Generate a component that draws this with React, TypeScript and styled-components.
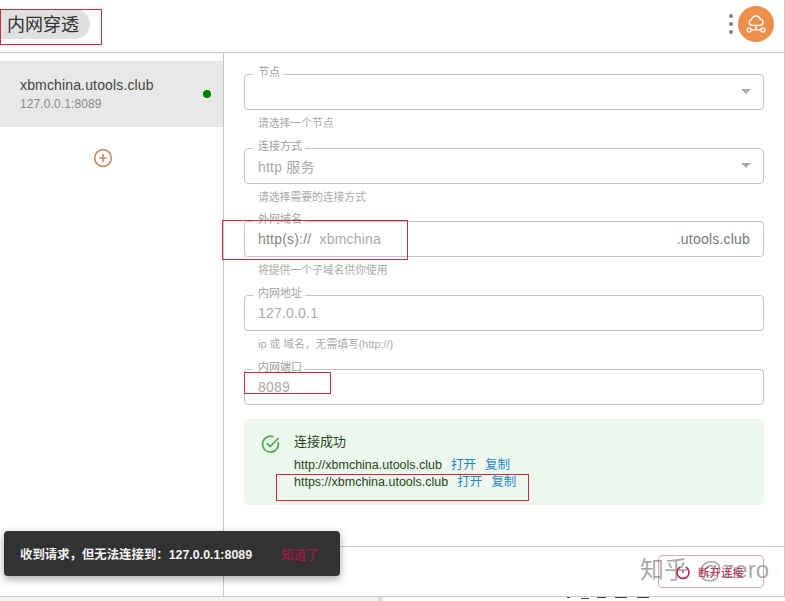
import { createGlobalStyle, styled } from 'styled-components';
import { CirclePlus } from 'lucide-react';

const GlobalStyle = createGlobalStyle`
  html, body {
    margin: 0;
    background: #fff;
    font-family: "Liberation Sans", "Noto Sans CJK SC", sans-serif;
    overflow: hidden;
  }
  * { box-sizing: border-box; }
`;

const Page = styled.div`
  position: relative;
  width: 785px;
  height: 601px;
  overflow: hidden;
`;
const Frame = styled.div`
  display: flex;
  flex-direction: column;
  width: 785px;
  height: 597px;
  border-right: 1px solid #c8c8c8;
  border-bottom: 1px solid #c8c8c8;
`;
const Header = styled.header`
  display: flex;
  align-items: center;
  justify-content: space-between;
  height: 53px;
  flex-shrink: 0;
  padding: 0 10px 5px 0;
  border-bottom: 1px solid #c8c8c8;
`;
const TitlePill = styled.h1`
  margin: 0;
  width: 90px;
  height: 30px;
  padding-left: 7px;
  background: #e0e0e0;
  border-radius: 0 15px 15px 0;
  color: #333;
  font-size: 18px;
  font-weight: 400;
  line-height: 32px;
`;
const HeaderActions = styled.div`
  display: flex;
  align-items: center;
  gap: 5px;
`;
const MenuDots = styled.div`
  display: flex;
  flex-direction: column;
  gap: 4px;
`;
const MenuDot = styled.span`
  width: 4px;
  height: 4px;
  border-radius: 50%;
  background: #808080;
`;
const CloudBadge = styled.div`
  display: flex;
  align-items: center;
  justify-content: center;
  width: 36px;
  height: 36px;
  border-radius: 50%;
  background: #ef8f4c;
`;
const Body = styled.div`
  display: flex;
  flex: 1;
  min-height: 0;
`;
const Sidebar = styled.aside`
  display: flex;
  flex-direction: column;
  align-items: center;
  width: 224px;
  flex-shrink: 0;
  padding-top: 8px;
  border-right: 1px solid #c8c8c8;
`;
const TunnelItem = styled.div`
  display: flex;
  align-items: center;
  justify-content: space-between;
  width: 100%;
  height: 66px;
  padding: 0 12px 0 20px;
  background: #e8e8e8;
`;
const TunnelText = styled.div`
  padding-top: 2px;
`;
const TunnelHost = styled.div`
  color: #444;
  font-size: 14px;
  letter-spacing: 0.15px;
  line-height: 18px;
`;
const TunnelAddr = styled.div`
  color: #888;
  font-size: 12px;
  letter-spacing: 0.1px;
  line-height: 20px;
`;
const StatusDot = styled.span`
  width: 8px;
  height: 8px;
  border-radius: 50%;
  background: #008000;
`;
const AddButton = styled.div`
  display: flex;
  margin: 21px 18px 0 0;
  color: #cd8b63;
`;
const Content = styled.main`
  display: flex;
  flex: 1;
  flex-direction: column;
  min-width: 0;
`;
const Form = styled.div`
  display: flex;
  flex: 1;
  flex-direction: column;
  padding: 13px 20px 0;
`;
const Field = styled.div<{ $height: number }>`
  height: ${(p) => p.$height}px;
  flex-shrink: 0;
`;
const Outline = styled.fieldset`
  display: flex;
  align-items: center;
  justify-content: space-between;
  height: 44px;
  margin: 0;
  padding: 0 13px 8px;
  border: 1px solid #c4c4c4;
  border-radius: 4px;
`;
const Legend = styled.legend`
  margin-left: -5px;
  padding: 0 3px 4px 5px;
  color: #a0a0a0;
  font-size: 11px;
  line-height: 12px;
`;
const FieldValue = styled.span<{ $dark?: boolean }>`
  color: ${(p) => (p.$dark ? '#888' : '#aaa')};
  font-size: 14px;
  letter-spacing: 0.2px;
  white-space: pre;
`;
const Suffix = styled.span`
  color: #777;
  font-size: 14px;
  letter-spacing: 0.2px;
`;
const Caret = styled.span`
  width: 0;
  height: 0;
  margin-right: -1px;
  border-left: 5px solid transparent;
  border-right: 5px solid transparent;
  border-top: 5px solid #aaa;
`;
const Helper = styled.div`
  margin: 6px 0 0 14px;
  color: #aaa;
  font-size: 10.8px;
  line-height: 14px;
`;
const Alert = styled.section`
  display: flex;
  gap: 13px;
  height: 86px;
  margin-top: 21px;
  padding: 13px 17px;
  background: #edf7ed;
  border-radius: 4px;
`;
const AlertIcon = styled.div`
  display: flex;
  margin-top: 2px;
  height: 20px;
`;
const AlertTitle = styled.div`
  margin-bottom: 5px;
  color: #1e4620;
  font-size: 13px;
  line-height: 20px;
`;
const UrlRow = styled.div`
  display: flex;
  gap: 9px;
  color: #1e4620;
  font-size: 12.5px;
  line-height: 17px;
`;
const TextLink = styled.a`
  color: #1e88c7;
`;
const Footer = styled.footer`
  display: flex;
  align-items: center;
  justify-content: flex-end;
  height: 50px;
  flex-shrink: 0;
  padding: 0 20px 0 0;
  border-top: 1px solid #c8c8c8;
`;
const DisconnectButton = styled.button`
  display: flex;
  align-items: center;
  gap: 7px;
  width: 106px;
  height: 33px;
  padding: 0 0 0 16px;
  background: #fff;
  border: 1px solid #e3a4bb;
  border-radius: 4px;
  color: #c8134f;
  font-family: inherit;
  font-size: 11.5px;
`;
const Snackbar = styled.div`
  position: absolute;
  left: 4px;
  top: 531px;
  display: flex;
  align-items: center;
  justify-content: space-between;
  width: 336px;
  height: 45px;
  padding: 0 21px 0 16px;
  background: #323232;
  border-radius: 4px;
  box-shadow: 0 3px 8px rgba(0, 0, 0, 0.35);
  color: #f2f2f2;
  font-size: 12.4px;
  font-weight: 700;
`;
const SnackAction = styled.span`
  color: #b5124e;
  font-size: 12.7px;
  font-weight: 400;
`;
const Annotation = styled.div<{ $x: number; $y: number; $w: number; $h: number }>`
  position: absolute;
  left: ${(p) => p.$x}px;
  top: ${(p) => p.$y}px;
  width: ${(p) => p.$w}px;
  height: ${(p) => p.$h}px;
  border: 1px solid #c0303a;
`;
const Watermark = styled.div`
  position: absolute;
  left: 640px;
  top: 555px;
  display: flex;
  gap: 10px;
  color: rgba(110, 110, 110, 0.6);
  font-size: 24px;
  line-height: 30px;
  white-space: nowrap;
`;
const BottomStrip = styled.div`
  position: absolute;
  left: 0;
  top: 597px;
  width: 383px;
  height: 4px;
  background: #f2f2f2;
  border-right: 5px solid #ddd;
`;
const CutOffMarks = styled.svg`
  position: absolute;
  left: 565px;
  top: 597px;
`;

function CloudIcon() {
  return (
    <svg width="22" height="22" viewBox="0 0 24 24" fill="none" stroke="#fff" strokeWidth="1.4">
      <path d="M7.5 13.5a3.2 3.2 0 0 1-.4-6.3 5 5 0 0 1 9.6-.6 3.5 3.5 0 0 1 .3 6.9z" />
      <path d="M12 13.5v5M6.5 18.5h11" />
      <rect x="2.5" y="16.5" width="4" height="4" rx="1" />
      <rect x="17.5" y="16.5" width="4" height="4" rx="1" />
    </svg>
  );
}

function SuccessIcon() {
  return (
    <svg width="20" height="20" viewBox="0 0 24 24" fill="none" stroke="#4caf50" strokeWidth="2">
      <path d="M20.5 9.5A9.5 9.5 0 1 1 15 3.4" />
      <path d="M7 11l4 4 10-10" />
    </svg>
  );
}

function PowerIcon() {
  return (
    <svg width="16" height="16" viewBox="0 0 24 24" fill="none" stroke="#c8134f" strokeWidth="2.4">
      <path d="M8 4.5a9 9 0 1 0 8 0" />
      <path d="M12 10v3" />
    </svg>
  );
}

export default function App() {
  return (
    <Page>
      <GlobalStyle />
      <Frame>
        <Header>
          <TitlePill>内网穿透</TitlePill>
          <HeaderActions>
            <MenuDots>
              <MenuDot />
              <MenuDot />
              <MenuDot />
            </MenuDots>
            <CloudBadge>
              <CloudIcon />
            </CloudBadge>
          </HeaderActions>
        </Header>
        <Body>
          <Sidebar>
            <TunnelItem>
              <TunnelText>
                <TunnelHost>xbmchina.utools.club</TunnelHost>
                <TunnelAddr>127.0.0.1:8089</TunnelAddr>
              </TunnelText>
              <StatusDot />
            </TunnelItem>
            <AddButton>
              <CirclePlus size={20} strokeWidth={2} />
            </AddButton>
          </Sidebar>
          <Content>
            <Form>
              <Field $height={74}>
                <Outline>
                  <Legend>节点</Legend>
                  <span />
                  <Caret />
                </Outline>
                <Helper>请选择一个节点</Helper>
              </Field>
              <Field $height={73}>
                <Outline>
                  <Legend>连接方式</Legend>
                  <FieldValue>http 服务</FieldValue>
                  <Caret />
                </Outline>
                <Helper>请选择需要的连接方式</Helper>
              </Field>
              <Field $height={74}>
                <Outline>
                  <Legend>外网域名</Legend>
                  <span>
                    <FieldValue $dark>http(s)://</FieldValue>
                    <FieldValue>{'  xbmchina'}</FieldValue>
                  </span>
                  <Suffix>.utools.club</Suffix>
                </Outline>
                <Helper>将提供一个子域名供你使用</Helper>
              </Field>
              <Field $height={74}>
                <Outline>
                  <Legend>内网地址</Legend>
                  <FieldValue>127.0.0.1</FieldValue>
                </Outline>
                <Helper>ip 或 域名，无需填写(http://)</Helper>
              </Field>
              <Field $height={37}>
                <Outline>
                  <Legend>内网端口</Legend>
                  <FieldValue>8089</FieldValue>
                </Outline>
              </Field>
              <Alert>
                <AlertIcon>
                  <SuccessIcon />
                </AlertIcon>
                <div>
                  <AlertTitle>连接成功</AlertTitle>
                  <UrlRow>
                    http://xbmchina.utools.club
                    <TextLink>打开</TextLink>
                    <TextLink>复制</TextLink>
                  </UrlRow>
                  <UrlRow>
                    https://xbmchina.utools.club
                    <TextLink>打开</TextLink>
                    <TextLink>复制</TextLink>
                  </UrlRow>
                </div>
              </Alert>
            </Form>
            <Footer>
              <DisconnectButton>
                <PowerIcon />
                断开连接
              </DisconnectButton>
            </Footer>
          </Content>
        </Body>
      </Frame>
      <BottomStrip />
      <CutOffMarks width="90" height="4" viewBox="0 0 90 4" fill="#444">
        <rect x="2" y="0" width="3" height="1" />
        <rect x="16" y="1" width="8" height="1" />
        <rect x="32" y="0" width="9" height="1" />
        <rect x="50" y="0" width="12" height="1" />
        <rect x="72" y="0" width="12" height="1" />
      </CutOffMarks>
      <Snackbar>
        收到请求，但无法连接到：127.0.0.1:8089
        <SnackAction>知道了</SnackAction>
      </Snackbar>
      <Annotation $x={0} $y={9} $w={102} $h={36} />
      <Annotation $x={222} $y={220} $w={186} $h={40} />
      <Annotation $x={244} $y={372} $w={87} $h={22} />
      <Annotation $x={276} $y={474} $w={253} $h={27} />
      <Watermark>
        <span>知乎</span>
        <span>@zero</span>
      </Watermark>
    </Page>
  );
}
